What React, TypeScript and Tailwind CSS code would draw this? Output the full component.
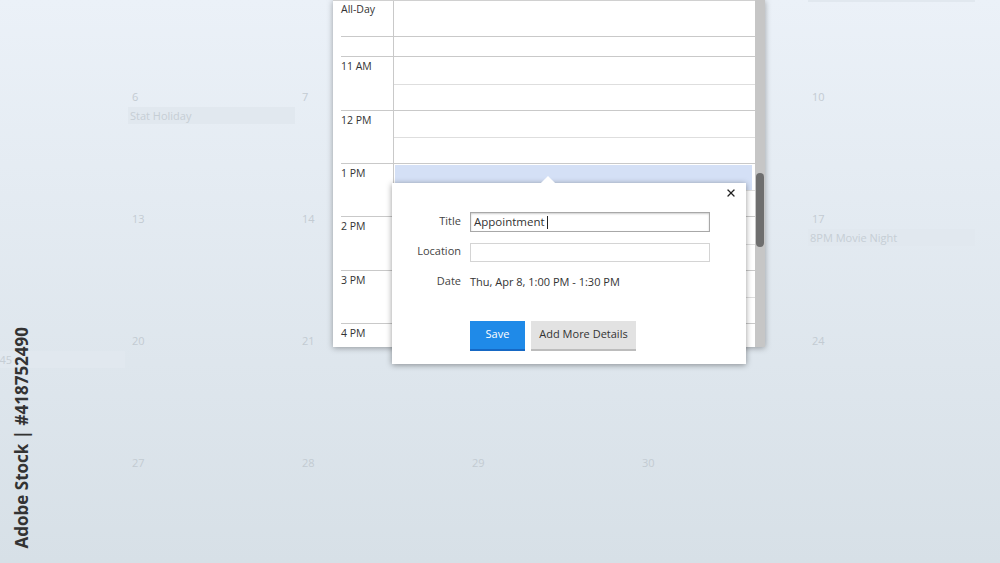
import { X } from "lucide-react"

type MonthEvent = { col: number; text: string }

// Month view behind the day flyout: 6 columns visible, rows of weeks
const WEEKS: { days: (number | null)[]; events?: MonthEvent[] }[] = [
  { days: [null, null, null, null, null, null], events: [{ col: 5, text: "" }] },
  { days: [5, 6, 7, 8, 9, 10], events: [{ col: 1, text: "Stat Holiday" }] },
  { days: [12, 13, 14, 15, 16, 17], events: [{ col: 5, text: "8PM Movie Night" }] },
  { days: [19, 20, 21, 22, 23, 24], events: [{ col: 0, text: "Swim 8:45" }] },
  { days: [26, 27, 28, 29, 30, null] },
]

const HOURS = [
  { label: "11 AM", h: "h-[54px]" },
  { label: "12 PM", h: "h-[53px]" },
  { label: "1 PM", h: "h-[53px]", busy: true },
  { label: "2 PM", h: "h-[54px]" },
  { label: "3 PM", h: "h-[53px]" },
  { label: "4 PM", h: "h-[54px]" },
]

function MonthGrid() {
  return (
    <div className="ml-[-42px] mt-[-36px] flex flex-col">
      {WEEKS.map((week, wi) => (
        <div key={wi} className="flex h-[122px]">
          {week.days.map((d, di) => {
            const ev = week.events?.find((e) => e.col === di)
            return (
              <div key={di} className="w-[170px] shrink-0 pt-[3px]">
                <div className="h-[18px] pl-[4px] text-[11px] text-[#c3cbd2]">{d}</div>
                {ev && (
                  <div className="mr-[3px] h-[17px] truncate bg-[#e1e8ef] pl-[2px] text-[11px] leading-[17px] text-[#c6ced5]">
                    {ev.text}
                  </div>
                )}
              </div>
            )
          })}
        </div>
      ))}
    </div>
  )
}

function DayView() {
  return (
    <div className="absolute left-[333px] top-0 flex h-[347px] w-[432px] overflow-hidden bg-white shadow-[0_1px_6px_rgba(0,0,0,0.35)]">
      <div className="flex flex-1 flex-col border-t border-[#d0d0d0] text-[10.5px] text-[#333]">
        {/* all-day strip */}
        <div className="flex h-[36px] shrink-0">
          <div className="ml-[8px] w-[52px] border-b border-[#c9c9c9] pt-[1px]">All-Day</div>
          <div className="flex-1 border-b border-l border-[#c9c9c9]" />
        </div>
        <div className="flex h-[20px] shrink-0">
          <div className="ml-[8px] w-[52px] border-b border-[#c9c9c9]" />
          <div className="flex-1 border-b border-l border-[#c9c9c9]" />
        </div>

        {HOURS.map((hr) => (
          <div key={hr.label} className={`flex shrink-0 ${hr.h}`}>
            <div className="ml-[8px] w-[52px] border-b border-[#c9c9c9] pt-[2px]">{hr.label}</div>
            <div className="flex flex-1 flex-col border-b border-l border-[#c9c9c9]">
              <div className="flex-1 border-b border-[#dedede] pt-px">
                {hr.busy && <div className="ml-px mr-[3px] h-full bg-[#d4e0f6]" />}
              </div>
              <div className="flex-1" />
            </div>
          </div>
        ))}
      </div>

      {/* scrollbar */}
      <div className="w-[10px] shrink-0 bg-[#c6c6c6] pt-[173px]">
        <div className="mx-auto h-[74px] w-[8px] rounded-[4px] bg-[#6e6e6e]" />
      </div>
    </div>
  )
}

function QuickAdd() {
  return (
    <div className="absolute left-[392px] top-[183px] h-[181px] w-[354px] bg-white shadow-[0_1px_6px_rgba(0,0,0,0.4)]">
      <div className="absolute left-[151px] top-[-5px] h-[10px] w-[10px] rotate-45 bg-white" />
      <button className="absolute right-[9px] top-[4px] text-[#222]">
        <X size={12} strokeWidth={2.6} />
      </button>

      <div className="relative grid grid-cols-[69px_240px] gap-x-[9px] pt-[29px] text-[11px] text-[#444]">
        <div className="pt-[1px] text-right">Title</div>
        <div className="flex h-[20px] items-center border border-[#a8a8a8] px-[3px] text-[11.5px] text-[#333] shadow-[inset_0_1px_2px_rgba(0,0,0,0.2)]">
          <span>Appointment</span>
          <span className="ml-[2px] h-[13px] w-px shrink-0 bg-[#222]" />
        </div>

        <div className="mt-[11px] text-right">Location</div>
        <div className="mt-[11px] h-[19px] border border-[#d4d4d4]" />

        <div className="mt-[11px] text-right">Date</div>
        <div className="mt-[12px] text-[#333]">Thu, Apr 8, 1:00 PM - 1:30 PM</div>

        <div />
        <div className="mt-[30px] flex gap-[6px]">
          <button className="h-[30px] w-[55px] border-b-2 border-[#1668c4] bg-[#1f8ae8] text-[11px] text-white">
            Save
          </button>
          <button className="h-[30px] w-[105px] border-b-2 border-[#bcbcbc] bg-[#e2e2e2] text-[11px] text-[#333]">
            Add More Details
          </button>
        </div>
      </div>
    </div>
  )
}

export default function App() {
  return (
    <div className="relative h-[563px] w-[1000px] overflow-hidden bg-gradient-to-b from-[#ebf1f8] to-[#d7e0e7] font-['Open_Sans',sans-serif]">
      <MonthGrid />
      <DayView />
      <QuickAdd />

      <div className="absolute bottom-[15px] left-[12px] rotate-180 text-[17px] font-bold leading-[20px] text-[#333] [writing-mode:vertical-rl]">
        Adobe Stock | #418752490
      </div>
    </div>
  )
}
